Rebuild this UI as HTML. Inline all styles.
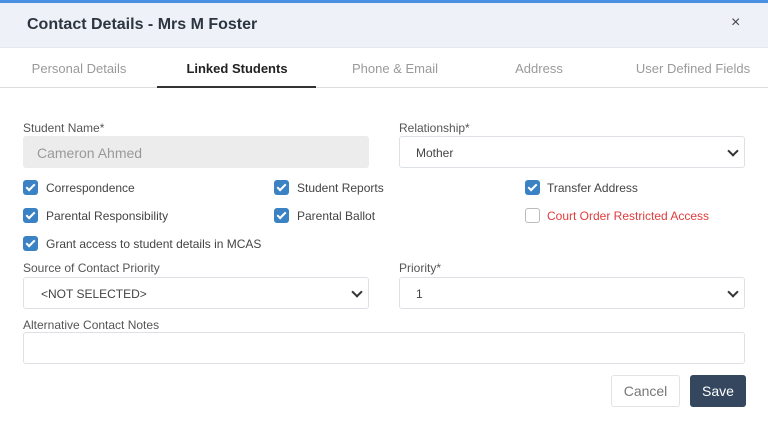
<!DOCTYPE html>
<html><head><style>
*{box-sizing:border-box;margin:0;padding:0}
body{width:768px;height:441px;background:#fff;font-family:"Liberation Sans",sans-serif;position:relative;overflow:hidden;color:#333}
.a{position:absolute}
.hdr{left:0;top:0;width:768px;height:48px;background:#eef2f8;border-top:3px solid #4a90e2;border-bottom:1px solid #e3e7ee}
.title{left:27px;top:16px;font-size:16px;font-weight:bold;color:#2d3540}
.x{left:731px;top:14px;font-size:16px;color:#444}
.tab{top:61px;width:158px;text-align:center;font-size:13px;color:#9a9a9a}
.tabline{left:0;top:87px;width:768px;height:1px;background:#ddd}
.lbl{font-size:12px;color:#555}
.inp{height:32px;border:1px solid #dde1e6;border-radius:3px;background:#fff;font-size:12px;color:#444;padding:9px 17px}
.sel::after{content:"";position:absolute;right:7px;top:10px;width:6px;height:6px;border-right:2px solid #333;border-bottom:2px solid #333;transform:rotate(45deg)}
.cb{width:15px;height:15px;border-radius:3px;background:#3b82c4}
.cb::after{content:"";position:absolute;left:5px;top:2px;width:3px;height:7px;border-right:2px solid #fff;border-bottom:2px solid #fff;transform:rotate(45deg)}
.cbo{width:15px;height:15px;border-radius:3px;border:1px solid #bbb;background:#fff}
.ct{font-size:12px;color:#444}
</style></head><body>
<div class="a hdr"></div>
<div class="a title">Contact Details - Mrs M Foster</div>
<div class="a x">×</div>
<div class="a tabline"></div>
<div class="a tab" style="left:0">Personal Details</div>
<div class="a tab" style="left:158px;color:#222;font-weight:bold">Linked Students</div>
<div class="a" style="left:157px;top:86px;width:159px;height:2px;background:#333"></div>
<div class="a tab" style="left:316px">Phone &amp; Email</div>
<div class="a tab" style="left:460px">Address</div>
<div class="a tab" style="left:614px">User Defined Fields</div>

<div class="a lbl" style="left:23px;top:121px">Student Name*</div>
<div class="a inp" style="left:23px;top:136px;width:346px;background:#ececec;border-color:#ececec;color:#999;font-size:14px;padding:8px 13px">Cameron Ahmed</div>
<div class="a lbl" style="left:399px;top:121px">Relationship*</div>
<div class="a inp sel" style="left:399px;top:136px;width:346px;padding-left:16px">Mother</div>

<div class="a cb" style="left:23px;top:180px"></div><div class="a ct" style="left:46px;top:181px">Correspondence</div>
<div class="a cb" style="left:274px;top:180px"></div><div class="a ct" style="left:297px;top:181px">Student Reports</div>
<div class="a cb" style="left:525px;top:180px"></div><div class="a ct" style="left:547px;top:181px">Transfer Address</div>
<div class="a cb" style="left:23px;top:208px"></div><div class="a ct" style="left:46px;top:209px">Parental Responsibility</div>
<div class="a cb" style="left:274px;top:208px"></div><div class="a ct" style="left:297px;top:209px">Parental Ballot</div>
<div class="a cbo" style="left:525px;top:208px"></div><div class="a ct" style="left:547px;top:209px;color:#e03c3c">Court Order Restricted Access</div>
<div class="a cb" style="left:23px;top:236px"></div><div class="a ct" style="left:46px;top:237px">Grant access to student details in MCAS</div>

<div class="a lbl" style="left:23px;top:261px">Source of Contact Priority</div>
<div class="a inp sel" style="left:23px;top:277px;width:346px">&lt;NOT SELECTED&gt;</div>
<div class="a lbl" style="left:399px;top:261px">Priority*</div>
<div class="a inp sel" style="left:399px;top:277px;width:346px;padding-left:16px">1</div>

<div class="a lbl" style="left:23px;top:318px">Alternative Contact Notes</div>
<div class="a inp" style="left:23px;top:332px;width:722px"></div>

<div class="a" style="left:611px;top:375px;width:69px;height:32px;border:1px solid #e3e3e3;border-radius:3px;font-size:14px;color:#777;text-align:center;line-height:30px">Cancel</div>
<div class="a" style="left:690px;top:375px;width:56px;height:32px;background:#34475e;border-radius:3px;font-size:14px;color:#fff;text-align:center;line-height:32px">Save</div>
</body></html>
